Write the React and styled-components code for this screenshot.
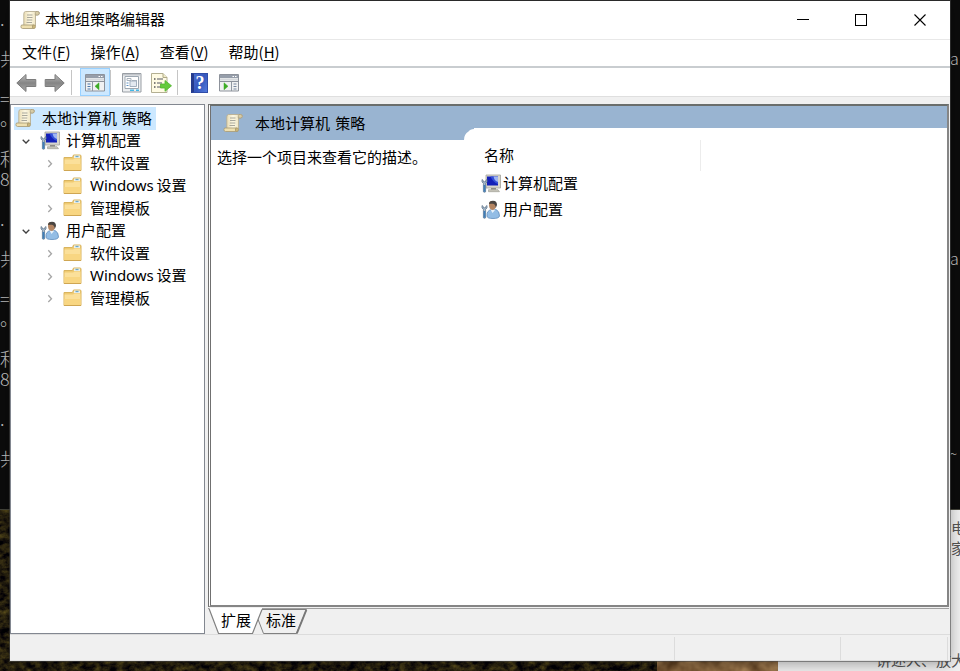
import { useState } from "react";
import styled, { createGlobalStyle } from "styled-components";

const menus = [
  { label: "文件", hotkey: "F" },
  { label: "操作", hotkey: "A" },
  { label: "查看", hotkey: "V" },
  { label: "帮助", hotkey: "H" },
];

const tree = [
  { id: "root", level: 0, icon: "scroll", label: "本地计算机 策略" },
  { id: "pc", level: 1, icon: "computer", label: "计算机配置", open: true },
  { id: "pc-soft", level: 2, icon: "folder", label: "软件设置" },
  { id: "pc-win", level: 2, icon: "folder", latin: "Windows", label: " 设置" },
  { id: "pc-tpl", level: 2, icon: "folder", label: "管理模板" },
  { id: "user", level: 1, icon: "user", label: "用户配置", open: true },
  { id: "user-soft", level: 2, icon: "folder", label: "软件设置" },
  { id: "user-win", level: 2, icon: "folder", latin: "Windows", label: " 设置" },
  { id: "user-tpl", level: 2, icon: "folder", label: "管理模板" },
];

const consoleLines = [
  ".", "", "共", "", "=", "。", "", "利", "8", "",
  ".", "", "共", "", "=", "。", "", "利", "8", "",
  ".", "", "共",
];

const ScrollIcon = () => (
  <svg width="20" height="20" viewBox="0 0 20 20">
    <defs>
      <linearGradient id="paper" x1="0" y1="0" x2="1" y2="0">
        <stop offset="0" stopColor="#e9dcb4" />
        <stop offset=".4" stopColor="#fdf8e3" />
        <stop offset="1" stopColor="#e6d9b0" />
      </linearGradient>
    </defs>
    <path d="M5.500 1.500h12q1.800 0 1.800 1.700T17.500 5H15.500V16H3.800V4Q3.800 1.500 5.500 1.500z" fill="url(#paper)" stroke="#b9af93" strokeWidth=".9" />
    <path d="M16 1.500q-1 .5-.7 3.500h2.500q1.500-.2 1.500-1.800T17.700 1.500z" fill="#d8cca5" stroke="#a89e82" strokeWidth=".8" />
    <path d="M1.500 15h11.500q-1 2 .3 3.500H2.500Q.9 18.300.9 16.700z" fill="#efe0b0" stroke="#ab9f7c" strokeWidth=".9" />
    <path d="M13 14.800q2.500-.3 2.500 1.900t-2.200 1.800q-1.500-.5-.3-3.700z" fill="#cdb97d" stroke="#a39468" strokeWidth=".7" />
    <path d="M7 5h5.500M7 7.500h5.500M6.800 10h5.500M6.500 12.500h5.500" stroke="#a9a79b" strokeWidth="1.100" />
  </svg>
);

const FolderIcon = () => (
  <svg width="19" height="18" viewBox="0 0 19 18">
    <path d="M1 3.500h8.500l1-2.500H17q1 0 1 1v14.500H1z" fill="#efcb72" stroke="#d9b45f" />
    <path d="M11 1.500h6v2.500h-6z" fill="#e9f0ee" />
    <path d="M12.500 2.500h3" stroke="#6ba7c9" strokeWidth="1.300" />
    <path d="M1.500 5.500h8.700l1.300-1h6v11.500h-16z" fill="#fbe09a" />
    <path d="M1.500 10h16v6h-16z" fill="#f8d682" />
    <path d="M1 16.500h17" stroke="#cfa652" />
  </svg>
);

const Wrench = () => (
  <g>
    <path d="M1 5.500v2.500l1.400 1.300v8.500q1.100 1 2.200 0V9.300L6 8V5.500L4.600 6.700v1.100H2.400V6.700z" fill="#a7bccf" stroke="#66798d" strokeWidth=".8" />
    <path d="M2.600 11h1.800v6.800H2.600z" fill="#3f7fba" />
  </g>
);

const ComputerIcon = () => (
  <svg width="20" height="20" viewBox="0 0 20 20">
    <path d="M5 1h14.500v13H5z" fill="#d8d6ce" stroke="#a3a29a" strokeWidth=".8" />
    <path d="M6 2.500h11V11.500H6z" fill="#1420b8" />
    <path d="M9.500 2.500H17V10q-5-1.500-7.500-7.500z" fill="#3450d8" />
    <path d="M12.500 2.500H17V8q-3.500-1-4.500-5.500z" fill="#9fb5f2" />
    <path d="M10 14h5v1.700h-5z" fill="#8d8c87" />
    <path d="M7.500 15.700h9.500l1.500 2h-11z" fill="#c9c7bd" stroke="#96958c" strokeWidth=".6" />
    <Wrench />
  </svg>
);

const UserIcon = () => (
  <svg width="20" height="20" viewBox="0 0 20 20">
    <path d="M6 16q-.5-5.500 4.500-6.500h4.500q3.500 1.500 3.500 6.500-.5 2.500-6.500 2.500T6 16z" fill="#93bde5" stroke="#5f8dbd" strokeWidth=".8" />
    <path d="M9.500 9.500l2 3.500L14.500 9.500z" fill="#e9f2fa" />
    <path d="M8 5q0-4 3.200-4T15 5q0 4.500-3.500 5Q8 9.500 8 5z" fill="#b48562" />
    <path d="M8 4Q8 .7 12 .7T16 5l-1.300 3.300Q14.800 4.300 12 3.800 9 3.500 8 4z" fill="#4a4541" />
    <Wrench />
  </svg>
);

const icons = {
  scroll: ScrollIcon,
  folder: FolderIcon,
  computer: ComputerIcon,
  user: UserIcon,
};

const ArrowIcon = ({ flip }) => (
  <svg width="21" height="20" viewBox="0 0 21 20">
    <defs>
      <linearGradient id="arrow" x1="0" y1="0" x2="0" y2="1">
        <stop offset="0" stopColor="#bdbdbd" />
        <stop offset=".5" stopColor="#858585" />
        <stop offset="1" stopColor="#aaa" />
      </linearGradient>
    </defs>
    <path
      d="M.8 10L10 1.500V6.500h9.800v7H10v5z"
      fill="url(#arrow)"
      stroke="#7c7c7c"
      strokeLinejoin="round"
      transform={flip ? "translate(21 0) scale(-1 1)" : undefined}
    />
  </svg>
);

const PaneIcon = ({ right }) => (
  <svg width="20" height="18" viewBox="0 0 20 18">
    <path d="M.5.500h19v16.500H.5z" fill="#f0f1f2" stroke="#8d929b" />
    <path d="M1 1h18v3H1z" fill="#969eaa" />
    <path d="M13.500 2.500h1.500M16 2.500h1.500" stroke="#fff" />
    <path d="M1 5.500h18" stroke="#d5d8dc" strokeWidth="2" />
    <path d="M.5 7.500h19" stroke="#8b919b" />
    {right ? (
      <>
        <path d="M12.500 8v9" stroke="#9098a2" />
        <path d="M14.500 10h3M14.500 12.500h3M14.500 15h3" stroke="#7888a0" />
        <path d="M5 8.800v7l4-3.500z" fill="#3dac25" stroke="#3dac25" strokeWidth=".5" />
      </>
    ) : (
      <>
        <path d="M7.500 8v9" stroke="#9098a2" />
        <path d="M2.500 10h3M2.500 12.500h3M2.500 15h3" stroke="#4b79ad" />
        <path d="M14 8.800v7l-4-3.500z" fill="#3dac25" stroke="#3dac25" strokeWidth=".5" />
      </>
    )}
  </svg>
);

const PropertiesIcon = () => (
  <svg width="20" height="20" viewBox="0 0 20 20">
    <path d="M.5.500h18.500v18.500H.5z" fill="#eceef0" stroke="#999ea4" />
    <path d="M1 1h17.500v1.500H1z" fill="#c1c5ca" />
    <path d="M3 3.500h13.500v12H3z" fill="#fff" stroke="#9da7b1" />
    <path d="M5 5.500h4v2H5zM10 7.500h5" fill="none" stroke="#a9b2bc" />
    <path d="M4.500 10h2M4.500 12.500h2" stroke="#5f93c5" />
    <path d="M8 8h6.500v5.500H8z" fill="#e3e9f0" stroke="#a3b1bf" />
    <path d="M8 17.300h4M14 17.300h3" stroke="#43b7e6" strokeWidth="1.500" />
  </svg>
);

const ExportIcon = () => (
  <svg width="21" height="20" viewBox="0 0 21 20">
    <path d="M.5.500h11.500L16 4.500v15H.5z" fill="#fffbe4" stroke="#b3af92" />
    <path d="M12 .5v4h4" fill="#f1ebc9" stroke="#aea987" />
    <path d="M3 6h1.500M3 10h1.500M3 14h1.500" stroke="#555" strokeWidth="1.500" />
    <path d="M6 6h6M6 10h5M6 14h5" stroke="#8d8d8d" strokeWidth="1.300" />
    <path d="M9.500 11h4.500V7.500l6.500 5.300-6.500 5.500V15H9.500z" fill="#64ca3b" stroke="#52b52d" strokeWidth=".8" />
  </svg>
);

const Chevron = ({ open }) => (
  <svg width="10" height="10" viewBox="0 0 10 10">
    {open ? (
      <path d="M1.700 3.800L5 7l3.300-3.200" fill="none" stroke="#404040" strokeWidth="1.300" />
    ) : (
      <path d="M4.300 2.300L7.500 5.700 4.300 9" fill="none" stroke="#a6a6a6" strokeWidth="1.300" />
    )}
  </svg>
);

const App = () => {
  const [selected, setSelected] = useState("root");

  return (
    <Desktop>
      <GlobalStyle />
      <Wallpaper viewBox="0 0 960 162">
        <filter id="grass" x="0" y="0" width="100%" height="100%" colorInterpolationFilters="sRGB">
          <feTurbulence type="fractalNoise" baseFrequency=".12 .16" numOctaves="4" seed="8" />
          <feColorMatrix values=".6 0 0 0 -.16  .53 0 0 0 -.15  .15 0 0 0 -.02  0 0 0 0 1" />
        </filter>
        <filter id="rock" x="0" y="0" width="100%" height="100%" colorInterpolationFilters="sRGB">
          <feTurbulence type="fractalNoise" baseFrequency=".06" numOctaves="3" seed="3" />
          <feColorMatrix values=".5 0 0 0 .27  .45 0 0 0 .16  .35 0 0 0 .06  0 0 0 0 1" />
        </filter>
        <rect width="960" height="162" filter="url(#grass)" />
        <rect x="657" width="121" height="162" filter="url(#rock)" />
      </Wallpaper>
      <Console>
        <ConsoleColumn>
          {consoleLines.map((line, i) => (
            <div key={i}>{line}</div>
          ))}
        </ConsoleColumn>
        <ConsoleColumn $right>
          {consoleLines.map((line, i) => (
            <div key={i}>{i === 2 || i === 12 ? "a" : i === 22 ? <sup>~</sup> : ""}</div>
          ))}
        </ConsoleColumn>
      </Console>
      <Document>
        <Side>
          <div>电</div>
          <div>家</div>
        </Side>
        <p>讲述人、放大</p>
      </Document>

      <Window>
        <TitleBar>
          <ScrollIcon />
          <h1>本地组策略编辑器</h1>
          <svg width="130" height="12" viewBox="0 0 130 12" shapeRendering="crispEdges">
            <path d="M0 5.500h12M58.500.5h11v11h-11z" fill="none" stroke="#000" />
            <path d="M117.500.500l11 11M128.500.500l-11 11" stroke="#000" shapeRendering="auto" strokeWidth="1.100" />
          </svg>
        </TitleBar>
        <MenuBar>
          {menus.map((menu) => (
            <li key={menu.hotkey}>
              {menu.label}(<u>{menu.hotkey}</u>)
            </li>
          ))}
        </MenuBar>
        <Toolbar>
          <Tool $width={28}><ArrowIcon /></Tool>
          <Tool $width={29}><ArrowIcon flip /></Tool>
          <Separator />
          <Tool $width={30} $active><PaneIcon /></Tool>
          <Separator $tight />
          <Tool $width={30}><PropertiesIcon /></Tool>
          <Tool $width={29}><ExportIcon /></Tool>
          <Separator $narrow />
          <Tool $width={30}><HelpBook>?</HelpBook></Tool>
          <Tool $width={30}><PaneIcon right /></Tool>
        </Toolbar>

        <Body>
          <Tree>
            {tree.map((node) => {
              const Icon = icons[node.icon];
              return (
                <TreeRow
                  key={node.id}
                  $level={node.level}
                  $selected={node.id === selected}
                  onClick={() => setSelected(node.id)}
                >
                  {node.level > 0 && (
                    <Toggle>
                      <Chevron open={node.open} />
                    </Toggle>
                  )}
                  <Icon />
                  <TreeLabel $level={node.level}>
                    {node.latin && <Latin>{node.latin}</Latin>}
                    {node.label}
                  </TreeLabel>
                </TreeRow>
              );
            })}
          </Tree>

          <Main>
            <Frame>
              <Header>
                <HeaderTitle>
                  <ScrollIcon />
                  <span>本地计算机 策略</span>
                </HeaderTitle>
                <HeaderCurve viewBox="0 0 10 12">
                  <path d="M0 0h10v1Q6 1 4.500 3.500 0 6 0 12z" fill="#99b4d1" />
                </HeaderCurve>
              </Header>
              <Content>
                <Description>选择一个项目来查看它的描述。</Description>
                <List>
                  <ColumnHead>名称</ColumnHead>
                  <Item>
                    <ComputerIcon />
                    <span>计算机配置</span>
                  </Item>
                  <Item>
                    <UserIcon />
                    <span>用户配置</span>
                  </Item>
                </List>
              </Content>
            </Frame>
            <Tabs>
              <svg width="100" height="27" viewBox="0 0 100 27">
                <path d="M49.500 10L55.500 25.500H88.500L98.500 1.500H53z" fill="#f0f0f0" stroke="#808080" />
                <path d="M88.800 25.500L98.300 2" stroke="#777" strokeWidth="2" />
                <path d="M1 .5L10.500 25.500H44.500L54 1.500V0H1z" fill="#fff" />
                <path d="M1 .5L10.500 25.500H44.500L54 1.500" fill="none" stroke="#808080" strokeWidth="1.200" />
              </svg>
              <span>扩展</span>
              <span>标准</span>
            </Tabs>
          </Main>
        </Body>

        <StatusBar>
          <StatusCell $width={665} />
          <StatusCell $width={166} />
          <StatusCell $width={107} />
        </StatusBar>
      </Window>
    </Desktop>
  );
};

export default App;

const GlobalStyle = createGlobalStyle`
  * {
    box-sizing: border-box;
  }
  body {
    margin: 0;
    overflow: hidden;
    background: #0c0c0c;
  }
  svg {
    display: block;
    flex: none;
  }
`;

const Desktop = styled.div`
  position: relative;
  width: 960px;
  height: 671px;
  overflow: hidden;
  font-family: "Noto Sans CJK SC", "Noto Sans", sans-serif;
  font-size: 15px;
  color: #000;
`;

const Wallpaper = styled.svg`
  position: absolute;
  left: 0;
  top: 509px;
  width: 960px;
  height: 162px;
`;

const Console = styled.div`
  position: absolute;
  left: 0;
  top: 0;
  width: 960px;
  height: 510px;
  display: flex;
  justify-content: space-between;
  padding-top: 8px;
  background: #0c0c0c;
  border-bottom: 1px solid #44443a;
`;

const ConsoleColumn = styled.div`
  width: 10px;
  color: #c4c4c4;
  font-family: "Noto Sans CJK SC", sans-serif;
  font-weight: 300;
  font-size: ${(props) => (props.$right ? "16px" : "18px")};

  div {
    height: 20px;
    line-height: 20px;
    white-space: nowrap;
  }
  sup {
    line-height: 0;
  }
`;

const Document = styled.div`
  position: absolute;
  left: 778px;
  top: 510px;
  width: 182px;
  height: 161px;
  display: flex;
  flex-direction: column;
  justify-content: space-between;
  background: #f2f2f2;
  color: #555;

  p {
    margin: 0 0 1px 98px;
    line-height: 20px;
    white-space: nowrap;
  }
`;

const Side = styled.div`
  margin-left: 173px;
  padding-top: 8px;
  line-height: 20px;
`;

const Window = styled.div`
  position: absolute;
  left: 10px;
  top: 1px;
  width: 940px;
  height: 660px;
  display: flex;
  flex-direction: column;
  background: #f0f0f0;
  box-shadow: 0 0 0 1px rgba(70, 70, 70, 0.55), 0 3px 14px rgba(0, 0, 0, 0.35);
`;

const TitleBar = styled.header`
  height: 39px;
  display: flex;
  align-items: center;
  padding: 0 23px 0 10px;
  background: #fff;
  border-bottom: 1px solid #e8e8e8;

  h1 {
    margin: 0 auto 2px 5px;
    font-size: 15px;
    font-weight: 400;
    line-height: 20px;
  }
`;

const MenuBar = styled.ul`
  height: 28px;
  display: flex;
  align-items: center;
  gap: 20px;
  margin: 0;
  padding: 0 12px 2px;
  list-style: none;
  background: #fff;
  border-bottom: 2px solid #c9cdd0;

  li {
    line-height: 20px;
  }
  u {
    text-underline-offset: 2px;
  }
`;

const Toolbar = styled.div`
  height: 29px;
  display: flex;
  align-items: center;
  padding: 0 2px;
  background: #fff;
  border-bottom: 1px solid #dfdfdf;
`;

const Tool = styled.div`
  width: ${(props) => props.$width}px;
  height: 28px;
  display: flex;
  align-items: center;
  justify-content: center;
  padding-top: 2px;
  background: ${(props) => (props.$active ? "#cce8ff" : "transparent")};
  border: 1px solid ${(props) => (props.$active ? "#99d1ff" : "transparent")};
`;

const Separator = styled.div`
  width: 1px;
  height: 25px;
  margin: ${(props) =>
    props.$tight ? "0 6px 0 0" : props.$narrow ? "0 6px 0 1px" : "0 8px 0 2px"};
  background: #c5c5c5;
`;

const HelpBook = styled.div`
  width: 17px;
  height: 20px;
  border: 1px solid #2f4ca8;
  border-left: 3px solid #263b8c;
  background: linear-gradient(120deg, #496cce, #3557bc 50%, #5279dc);
  color: #fff;
  font: bold 18px/18px "Liberation Serif", serif;
  text-align: center;
`;

const Body = styled.div`
  flex: 1;
  min-height: 0;
  display: flex;
  gap: 3px;
  padding-top: 7px;
`;

const Tree = styled.div`
  width: 195px;
  height: 530px;
  padding: 2px 0 0 3px;
  background: #fff;
  border: 1px solid #828790;
`;

const TreeRow = styled.div`
  width: fit-content;
  height: 22.5px;
  display: flex;
  align-items: center;
  padding: 0 4px 0 ${(props) => [1, 7, 30][props.$level]}px;
  background: ${(props) => (props.$selected ? "#cce8ff" : "transparent")};
`;

const Toggle = styled.span`
  width: 19px;
`;

const TreeLabel = styled.span`
  margin: 0 0 1px ${(props) => [7, 6, 8][props.$level]}px;
  line-height: 20px;
  white-space: pre;
  word-spacing: ${(props) => (props.$level === 0 ? 1.5 : -0.5)}px;
`;

const Latin = styled.span`
  font-family: "Noto Sans", "Open Sans", sans-serif;
  letter-spacing: -0.05px;
`;

const Main = styled.div`
  width: 741px;
  display: flex;
  flex-direction: column;
`;

const Frame = styled.section`
  height: 503px;
  display: flex;
  flex-direction: column;
  background: #fff;
  border: 2px solid #858585;
  border-top-color: #6a6e6c;
  border-left: 3px double #707070;
  box-shadow: 0 1px #f0f0f0, 0 2px #a0a0a0;
`;

const Header = styled.div`
  height: 34px;
  display: flex;
  background: linear-gradient(#99b4d1 22px, #fff 22px);
`;

const HeaderTitle = styled.div`
  width: 253px;
  display: flex;
  align-items: center;
  padding: 0 0 0 12px;
  background: #99b4d1;

  span {
    margin-left: 12px;
    line-height: 20px;
    word-spacing: 2px;
  }
`;

const HeaderCurve = styled.svg`
  width: 10px;
  height: 12px;
  margin-top: 22px;
`;

const Content = styled.div`
  flex: 1;
  display: flex;
`;

const Description = styled.div`
  width: 268px;
  padding: 7px 0 0 6px;
  line-height: 20px;
`;

const List = styled.div`
  width: 222px;
`;

const ColumnHead = styled.div`
  height: 31px;
  padding: 5px 0 0 5px;
  line-height: 20px;
  border-right: 1px solid #ececec;
`;

const Item = styled.div`
  height: 26px;
  display: flex;
  align-items: center;
  gap: 2px;
  padding-left: 2px;
  line-height: 20px;

  span {
    margin-bottom: 2px;
  }
`;

const Tabs = styled.div`
  position: relative;
  height: 26px;
  display: flex;
  align-items: center;
  gap: 15px;
  padding: 0 0 0 13px;

  svg {
    position: absolute;
    left: 0;
    top: 1px;
  }
  span {
    position: relative;
    line-height: 20px;
  }
`;

const StatusBar = styled.footer`
  height: 27px;
  display: flex;
  padding-top: 2px;
  border-top: 1px solid #dcdcdc;
  border-bottom: 1px solid #e0e0e0;
`;

const StatusCell = styled.div`
  width: ${(props) => props.$width}px;
  border-right: 1px solid #dcdcdc;
`;
